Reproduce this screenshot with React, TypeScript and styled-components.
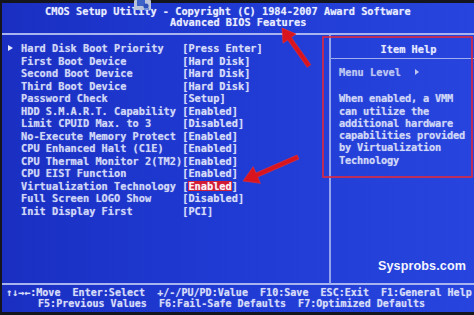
import React from 'react';
import styled, { createGlobalStyle } from 'styled-components';

const GlobalStyle = createGlobalStyle`
  html, body {
    margin: 0;
    padding: 0;
    background: #14151b;
    overflow: hidden;
  }
`;

// dark photo edges around the monitor picture
const Frame = styled.div`
  position: relative;
  width: 474px;
  height: 315px;
  box-sizing: border-box;
  padding: 3px 0 3px 2px;
  background: #15161d;
  overflow: hidden;
`;

const Screen = styled.div`
  height: 100%;
  display: flex;
  flex-direction: column;
  background: linear-gradient(90deg, #1a2fc2 0%, #1f3ad2 45%, #2745de 100%);
  font-family: "DejaVu Sans Mono", "Liberation Mono", monospace;
  font-weight: bold;
  font-size: 10.3px;
  color: #d2d9f6;
  white-space: pre;
  text-shadow: 0 0 1px rgba(210, 220, 255, 0.55);
`;

const Header = styled.div`
  height: 30px;
  box-sizing: border-box;
  padding-top: 3px;
  color: #e8ecff;
`;

const HeaderLine = styled.div<{ $indent: number }>`
  height: 11px;
  line-height: 11px;
  padding-left: ${(p) => p.$indent}px;
`;

const Rule = styled.div`
  height: 2px;
  background: #a7b4f0;
  flex: none;
`;

const Body = styled.div`
  flex: 1;
  display: flex;
  min-height: 0;
`;

const MenuPane = styled.div`
  width: 327px;
  flex: none;
  padding-top: 7px;
  box-sizing: border-box;
`;

const Row = styled.div`
  display: grid;
  grid-template-columns: 19px 26ch auto;
  height: 12.5px;
  line-height: 12.5px;
  align-items: center;
`;

const Marker = styled.span`
  width: 0;
  height: 0;
  margin-left: 6px;
  border-left: 5px solid #e4e8ff;
  border-top: 3.5px solid transparent;
  border-bottom: 3.5px solid transparent;
`;

const Label = styled.span`
  color: #d0d7f6;
`;

const Value = styled.span`
  color: #d6dcf8;
`;

const Highlight = styled.span`
  display: inline-block;
  height: 10px;
  line-height: 10px;
  background: #d41a32;
  color: #fff2f4;
`;

const HelpPane = styled.div`
  width: 155px;
  flex: none;
  border-left: 2px solid #94a4ec;
`;

const HelpTitle = styled.div`
  height: 24px;
  box-sizing: border-box;
  padding-top: 8px;
  line-height: 12px;
  text-align: center;
  color: #e6eaff;
  border-bottom: 1px solid #9eaeee;
`;

const HelpBody = styled.div`
  padding: 7px 0 0 8px;
  line-height: 12.3px;
`;

const MenuLevel = styled.div`
  display: flex;
  align-items: center;
  color: #bcc6f0;
`;

const LevelArrow = styled.span`
  width: 0;
  height: 0;
  margin-left: 14px;
  border-left: 4px solid #bcc6f0;
  border-top: 3px solid transparent;
  border-bottom: 3px solid transparent;
`;

const HelpText = styled.div`
  margin-top: 14px;
  color: #cfd6f6;
  letter-spacing: -0.2px;
`;

const Footer = styled.div`
  height: 27px;
  box-sizing: border-box;
  padding-top: 3px;
  font-size: 10.05px;
  color: #d6dcf8;
`;

const FooterLine = styled.div<{ $indent: number }>`
  height: 10.5px;
  line-height: 10.5px;
  padding-left: ${(p) => p.$indent}px;
`;

const Watermark = styled.div`
  position: absolute;
  left: 378px;
  top: 259px;
  font-family: "Liberation Sans", Arial, sans-serif;
  font-weight: bold;
  font-size: 12.6px;
  color: #f4f5ff;
  letter-spacing: 0.1px;
`;

const Annotations = styled.svg`
  position: absolute;
  left: 0;
  top: 0;
  pointer-events: none;
`;

const TopIcon = styled.svg`
  position: absolute;
  left: 134px;
  top: 0;
`;

type Item = { label: string; value: string; selected?: boolean; hot?: boolean };

const items: Item[] = [
  { label: 'Hard Disk Boot Priority', value: 'Press Enter', selected: true },
  { label: 'First Boot Device', value: 'Hard Disk' },
  { label: 'Second Boot Device', value: 'Hard Disk' },
  { label: 'Third Boot Device', value: 'Hard Disk' },
  { label: 'Password Check', value: 'Setup' },
  { label: 'HDD S.M.A.R.T. Capability', value: 'Enabled' },
  { label: 'Limit CPUID Max. to 3', value: 'Disabled' },
  { label: 'No-Execute Memory Protect', value: 'Enabled' },
  { label: 'CPU Enhanced Halt (C1E)', value: 'Enabled' },
  { label: 'CPU Thermal Monitor 2(TM2)', value: 'Enabled' },
  { label: 'CPU EIST Function', value: 'Enabled' },
  { label: 'Virtualization Technology', value: 'Enabled', hot: true },
  { label: 'Full Screen LOGO Show', value: 'Disabled' },
  { label: 'Init Display First', value: 'PCI' },
];

const helpLines = [
  'When enabled, a VMM',
  'can utilize the',
  'additional hardware',
  'capabilities provided',
  'by Virtualization',
  'Technology',
];

const App: React.FC = () => {
  return (
    <>
      <GlobalStyle />
      <Frame>
        <Screen>
          <Header>
            <HeaderLine $indent={43}>
              CMOS Setup Utility - Copyright (C) 1984-2007 Award Software
            </HeaderLine>
            <HeaderLine $indent={168}>Advanced BIOS Features</HeaderLine>
          </Header>
          <Rule />

          <Body>
            <MenuPane>
              {items.map((it) => (
                <Row key={it.label}>
                  {it.selected ? <Marker /> : <span />}
                  <Label>{it.label}</Label>
                  <Value>
                    [{it.hot ? <Highlight>{it.value}</Highlight> : it.value}]
                  </Value>
                </Row>
              ))}
            </MenuPane>

            <HelpPane>
              <HelpTitle>Item Help</HelpTitle>
              <HelpBody>
                <MenuLevel>
                  Menu Level
                  <LevelArrow />
                </MenuLevel>
                <HelpText>
                  {helpLines.map((l) => (
                    <div key={l}>{l}</div>
                  ))}
                </HelpText>
              </HelpBody>
            </HelpPane>
          </Body>

          <Rule />
          <Footer>
            <FooterLine $indent={4}>
              ↑↓→←:Move  Enter:Select  +/-/PU/PD:Value  F10:Save  ESC:Exit  F1:General Help
            </FooterLine>
            <FooterLine $indent={36}>
              F5:Previous Values  F6:Fail-Safe Defaults  F7:Optimized Defaults
            </FooterLine>
          </Footer>
        </Screen>

        <TopIcon width="17" height="10" viewBox="0 0 17 10">
          <rect x="0" y="0" width="17" height="10" rx="1" fill="#b9c4dc" />
          <rect x="3" y="0" width="8" height="6" fill="#3e63c8" />
          <circle cx="12" cy="6" r="2.6" fill="#2b4fb8" />
          <rect x="10" y="8" width="5" height="2" fill="#6f8fd8" />
        </TopIcon>

        <Watermark>Sysprobs.com</Watermark>

        <Annotations width="474" height="315" viewBox="0 0 474 315">
          <rect
            x="323"
            y="37"
            width="149"
            height="140"
            fill="none"
            stroke="#e2283a"
            strokeWidth="1.6"
          />
          <polygon
            points="310.8,64.7 291.3,37.3 296,34 282,28 283,43.2 287.7,39.9 307.2,67.3"
            fill="#d8141e"
            stroke="#f03030"
            strokeWidth="0.6"
            strokeLinejoin="round"
          />
          <polygon
            points="298.9,159 257.7,177 260.4,183.3 243,181 253.2,166.7 255.9,173 297.1,155"
            fill="#d8141e"
            stroke="#f03030"
            strokeWidth="0.6"
            strokeLinejoin="round"
          />
        </Annotations>
      </Frame>
    </>
  );
};

export default App;
